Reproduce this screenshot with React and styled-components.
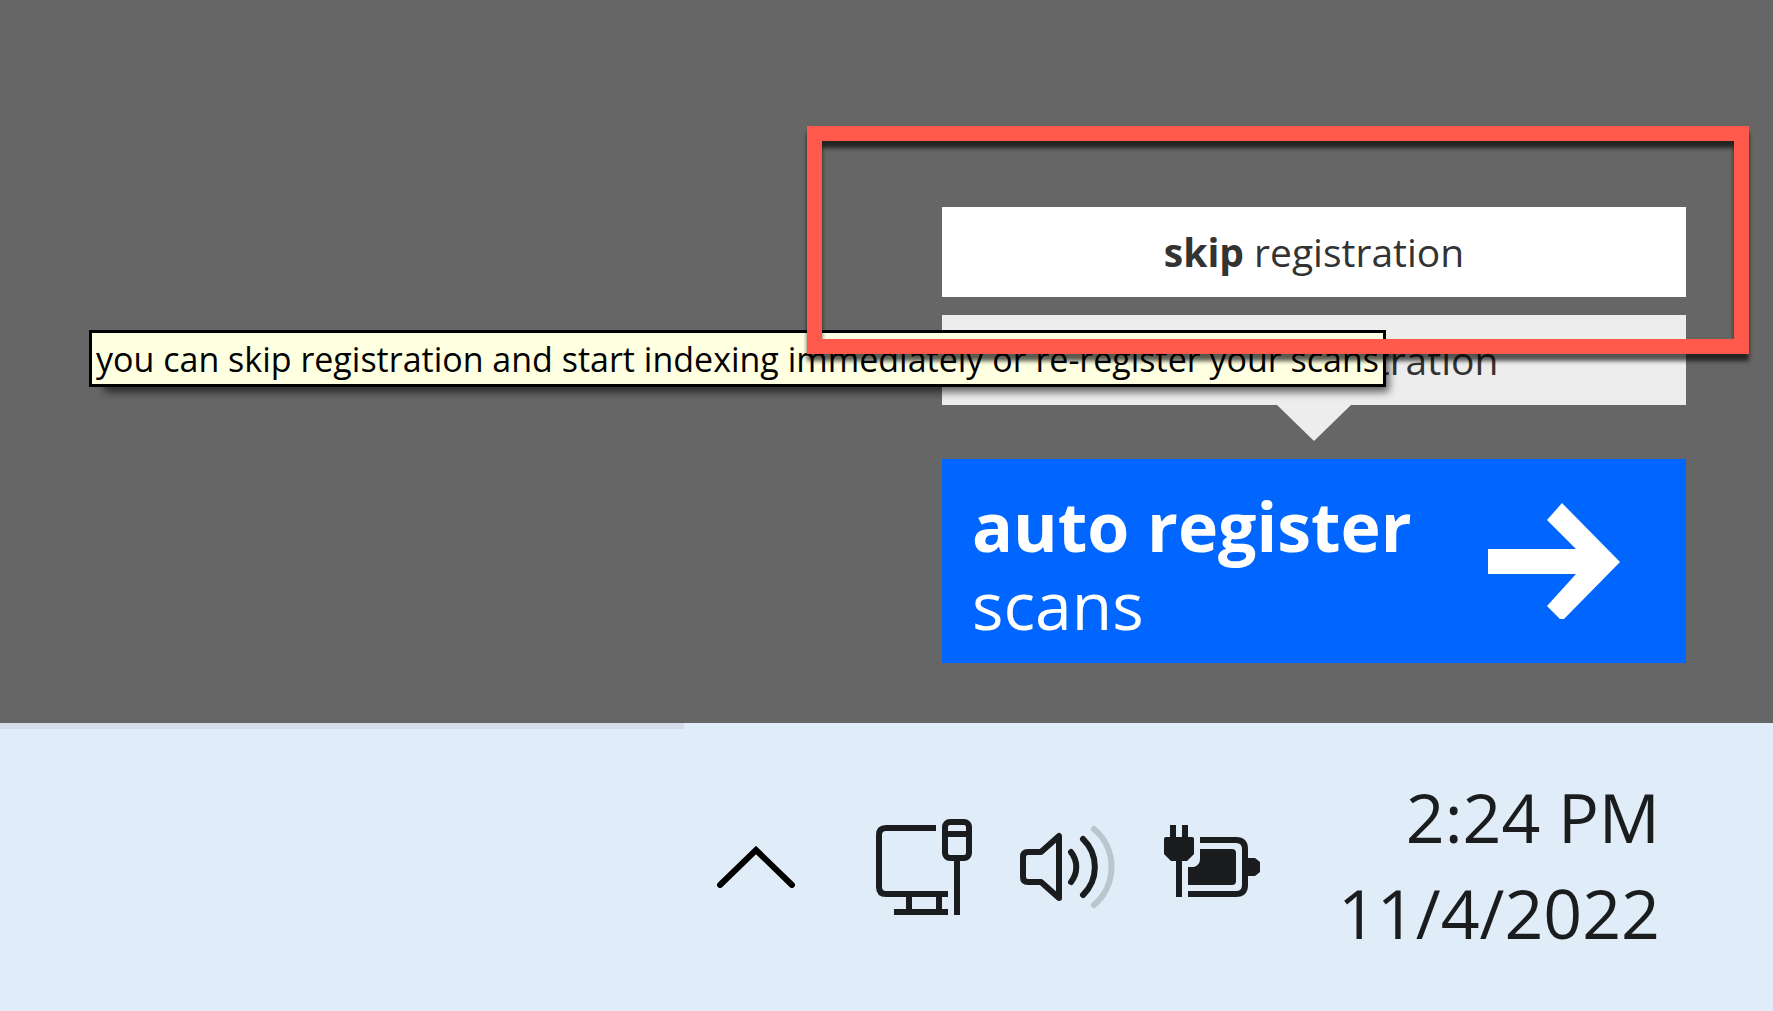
import React from 'react';
import styled, { createGlobalStyle } from 'styled-components';

const GlobalStyle = createGlobalStyle`
  * {
    box-sizing: border-box;
  }

  body {
    margin: 0;
    font-family: "Open Sans", "Noto Sans", sans-serif;
  }
`;

const Desktop = styled.div`
  display: flex;
  flex-direction: column;
  min-height: 100vh;
  overflow: hidden;
`;

const Workspace = styled.main`
  display: flex;
  flex: 1;
  flex-direction: column;
  align-items: flex-end;
  justify-content: flex-end;
  padding: 60px 87px 60px 87px;
  background-color: #666;
`;

const Actions = styled.div`
  display: flex;
  flex-direction: column;
  gap: 18px;
  width: 100%;
  max-width: 744px;
`;

const Slot = styled.div`
  position: relative;
  z-index: ${props => (props.$raised ? 2 : 1)};
`;

const Option = styled.button`
  display: block;
  width: 100%;
  height: 90px;
  padding: 0;
  border: 0;
  background-color: ${props => (props.$muted ? '#ededed' : '#fff')};
  color: #333;
  font-family: inherit;
  font-size: 39px;
  line-height: 48px;
  text-align: center;
  cursor: pointer;
`;

const Pointer = styled.div`
  width: 0;
  height: 36px;
  margin: 0 auto;
  border: solid transparent;
  border-width: 36px 37px 0;
  border-top-color: #ededed;
`;

const Tooltip = styled.div`
  position: absolute;
  top: 15px;
  right: 300px;
  padding: 4px 4px 2px;
  border: 3px solid #000;
  background-color: #ffffe1;
  box-shadow: 9px 11px 8px -6px rgba(0, 0, 0, 0.6);
  color: #000;
  font-size: 34px;
  line-height: 45px;
  white-space: nowrap;
`;

const Highlight = styled.div`
  position: absolute;
  top: -81px;
  right: -63px;
  bottom: -57px;
  left: -135px;
  border: 15px solid #ff594b;
  filter: drop-shadow(0 7px 2px rgba(0, 0, 0, 0.65));
  pointer-events: none;
`;

const RegisterButton = styled.button`
  display: flex;
  align-items: center;
  justify-content: space-between;
  width: 100%;
  padding: 20px 66px 20px 30px;
  border: 0;
  background-color: #06f;
  color: #fff;
  font-family: inherit;
  font-size: 66px;
  line-height: 78px;
  text-align: left;
  cursor: pointer;
`;

const Label = styled.span`
  display: block;
  padding-top: 8px;
`;

const Line = styled.span`
  display: block;
  font-size: ${props => (props.$strong ? 68 : 66)}px;
  font-weight: ${props => (props.$strong ? 700 : 400)};
`;

const Taskbar = styled.footer`
  display: flex;
  align-items: center;
  justify-content: flex-end;
  padding: 46px 113px 46px 0;
  background-color: #e0ecf8;
  position: relative;
`;

const TaskbarEdge = styled.div`
  position: absolute;
  top: 0;
  left: 0;
  width: 684px;
  height: 6px;
  background-color: #d3dee8;
`;

const TrayButton = styled.button`
  display: flex;
  margin: 0;
  padding: 0;
  border: 0;
  background: none;
  color: #1a1c1e;
  cursor: pointer;
`;

const Tray = styled.div`
  display: flex;
  align-items: center;
  gap: 48px;
  margin: 0 78px 0 81px;
`;

const Clock = styled.div`
  min-width: 312px;
  padding-bottom: 4px;
  color: #1a1c1e;
  font-size: 68px;
  line-height: 96px;
  text-align: right;
`;

const ArrowIcon = () => (
  <svg width="132" height="116" viewBox="0 0 132 116" fill="currentColor" aria-hidden="true">
    <path d="M0 46H88L59 17L74 0L132 59L76 116H72L59 103L88 71H0Z" />
  </svg>
);

const ChevronIcon = () => (
  <svg width="78" height="42" viewBox="0 0 78 42" fill="none" stroke="#000" strokeWidth="6" strokeLinecap="round" aria-hidden="true">
    <path d="M3 39L39 4L75 39" />
  </svg>
);

const NetworkIcon = () => (
  <svg width="96" height="96" viewBox="0 0 96 96" fill="none" stroke="currentColor" strokeWidth="6" aria-hidden="true">
    <path d="M60 9H10Q3 9 3 16V68Q3 75 10 75H72" />
    <path d="M18 93H72M33 75V93M63 75V93" />
    <rect x="69" y="3" width="24" height="36" rx="5" />
    <path d="M69 15H93M81 39V96" />
  </svg>
);

const VolumeIcon = () => (
  <svg width="96" height="96" viewBox="0 0 96 96" fill="none" stroke="currentColor" strokeWidth="6" strokeLinejoin="round" strokeLinecap="round" aria-hidden="true">
    <path d="M39 17V79L21 63H8Q3 63 3 58V38Q3 33 8 33H21Z" />
    <path d="M51 33A24 24 0 0 1 51 63" />
    <path d="M63 20A39 39 0 0 1 63 76" />
    <path d="M74 10A50 50 0 0 1 74 86" stroke="#bac5ce" />
  </svg>
);

const BatteryIcon = () => (
  <svg width="96" height="96" viewBox="0 0 96 96" fill="currentColor" aria-hidden="true">
    <path d="M6 6H12V18H18V6H24V18H28Q30 18 30 20V35L23 42H18V78H12V42H7L0 35V20Q0 18 2 18H6Z" />
    <path d="M36 30H68Q72 30 72 34V62Q72 66 68 66H24V48H30Q36 46 36 40Z" />
    <path d="M36 21H72Q81 21 81 30V66Q81 75 72 75H24" fill="none" stroke="currentColor" strokeWidth="6" />
    <path d="M84 39H91L96 43V53L91 57H84Z" />
  </svg>
);

const App = () => (
  <Desktop>
    <GlobalStyle />
    <Workspace>
      <Actions>
        <Slot $raised>
          <Option type="button"><b>skip</b> registration</Option>
          <Highlight />
        </Slot>
        <Slot>
          <Option type="button" $muted aria-describedby="registration-tip"><b>manual</b> registration</Option>
          <Pointer />
          <Tooltip id="registration-tip" role="tooltip">
            you can skip registration and start indexing immediately or re-register your scans
          </Tooltip>
        </Slot>
        <RegisterButton type="button">
          <Label>
            <Line $strong>auto register</Line>
            <Line>scans</Line>
          </Label>
          <ArrowIcon />
        </RegisterButton>
      </Actions>
    </Workspace>
    <Taskbar>
      <TaskbarEdge />
      <TrayButton type="button" aria-label="Show hidden icons"><ChevronIcon /></TrayButton>
      <Tray>
        <TrayButton type="button" aria-label="Network"><NetworkIcon /></TrayButton>
        <TrayButton type="button" aria-label="Volume"><VolumeIcon /></TrayButton>
        <TrayButton type="button" aria-label="Battery"><BatteryIcon /></TrayButton>
      </Tray>
      <Clock>
        <div>2:24 PM</div>
        <div>11/4/2022</div>
      </Clock>
    </Taskbar>
  </Desktop>
);

export default App;
